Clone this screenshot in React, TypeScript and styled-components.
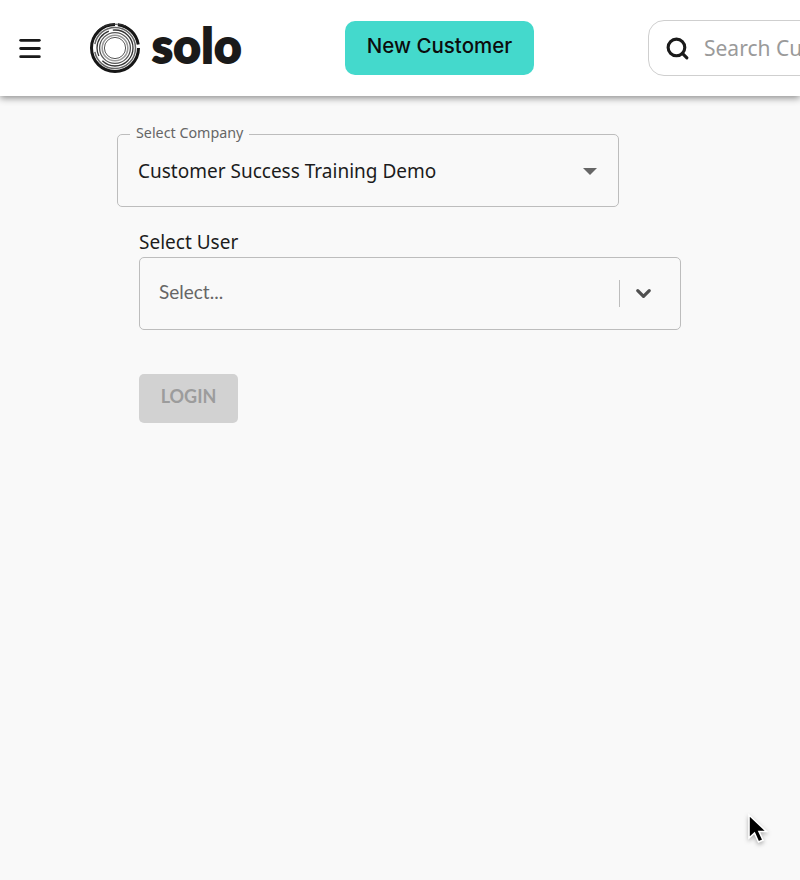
import React from "react";
import styled, { createGlobalStyle } from "styled-components";
import { ChevronDown, Menu, Search } from "lucide-react";

const GlobalStyle = createGlobalStyle`
  html, body {
    margin: 0;
    padding: 0;
    height: 100%;
    overflow: hidden;
    background: #f9f9f9;
  }
  * { box-sizing: border-box; }
`;

const Page = styled.div`
  position: relative;
  width: 800px;
  height: 880px;
  overflow: hidden;
  background: #f9f9f9;
  font-family: "Noto Sans", sans-serif;
`;

const Header = styled.header`
  display: flex;
  align-items: center;
  width: 800px;
  height: 96px;
  padding-left: 16px;
  background: #fff;
  box-shadow: 0 2px 7px rgba(0, 0, 0, 0.45);
  overflow: hidden;
`;

const MenuButton = styled.div`
  flex: none;
  display: flex;
  width: 28px;
  color: #1a1a1a;
`;

const Logo = styled.div`
  flex: none;
  display: flex;
  align-items: center;
  gap: 11px;
  margin-left: 45px;
  width: 256px;
`;

const LogoText = styled.span`
  font-family: "Lato", sans-serif;
  font-weight: 900;
  font-size: 47px;
  line-height: 1;
  letter-spacing: 0.8px;
  color: #1a1a1a;
  position: relative;
  top: -3px;
  -webkit-text-stroke: 2px #1a1a1a;
`;

const NewCustomerButton = styled.button`
  flex: none;
  width: 189px;
  height: 54px;
  border: 0;
  border-radius: 10px;
  background: #44d9cc;
  color: #0c0c0c;
  font-family: "Inter", sans-serif;
  font-weight: 500;
  font-size: 20.5px;
  padding: 0 0 6px;
`;

const SearchBox = styled.div`
  flex: none;
  display: flex;
  align-items: center;
  gap: 14px;
  width: 300px;
  height: 56px;
  margin-left: 114px;
  padding-left: 16px;
  border: 1px solid #cfcfcf;
  border-radius: 16px;
  background: #fff;
  color: #1a1a1a;
`;

const SearchText = styled.span`
  font-size: 21px;
  color: #9a9a9a;
  white-space: nowrap;
`;

const Content = styled.main`
  display: flex;
  flex-direction: column;
  padding: 38px 0 0 117px;
`;

const CompanyField = styled.fieldset`
  display: flex;
  align-items: center;
  justify-content: space-between;
  width: 502px;
  height: 83px;
  margin: -10px 0 0;
  padding: 0 20px;
  border: 1px solid #bdbdbd;
  border-radius: 5px;
`;

const CompanyLegend = styled.legend`
  margin-left: -8px;
  padding: 0 6px 2px;
  font-size: 14.3px;
  line-height: 18px;
  color: #666;
`;

const CompanyValue = styled.div`
  display: flex;
  align-items: center;
  justify-content: space-between;
  width: 100%;
  height: 72px;
  margin-top: -9px;
  font-size: 19px;
  color: #1c1c1c;
`;

const Caret = styled.span`
  width: 0;
  height: 0;
  margin-right: 1px;
  border-left: 7px solid transparent;
  border-right: 7px solid transparent;
  border-top: 7px solid #666;
`;

const UserSection = styled.section`
  display: flex;
  flex-direction: column;
  margin: 23px 0 0 22px;
`;

const UserLabel = styled.label`
  font-size: 19px;
  line-height: 27px;
  margin-top: -1px;
  margin-bottom: 1px;
  color: #1c1c1c;
`;

const UserSelect = styled.div`
  display: flex;
  align-items: center;
  width: 542px;
  height: 73px;
  padding: 0 25px 0 19px;
  border: 1px solid #bdbdbd;
  border-radius: 5px;
`;

const Placeholder = styled.span`
  flex: 1;
  font-family: "Lato", sans-serif;
  font-size: 19px;
  color: #666;
  padding-bottom: 5px;
`;

const Divider = styled.span`
  width: 1px;
  height: 27px;
  margin-right: 12px;
  background: #bdbdbd;
`;

const ChevronSlot = styled.span`
  display: flex;
  color: #505050;
`;

const LoginButton = styled.button`
  width: 99px;
  height: 49px;
  margin-top: 44px;
  padding: 0 0 6px;
  border: 0;
  border-radius: 5px;
  background: #d2d2d2;
  color: #9c9c9c;
  font-family: "Lato", sans-serif;
  font-weight: 700;
  font-size: 18px;
`;

const Pointer = styled.svg`
  position: absolute;
  left: 745px;
  top: 812px;
  filter: drop-shadow(0 2px 2px rgba(0, 0, 0, 0.3));
`;

function LogoMark() {
  return (
    <svg width="52" height="52" viewBox="0 0 52 52" fill="none">
      <circle cx="26" cy="26" r="23.5" stroke="#161616" strokeWidth="3" strokeDasharray="110 3 30 4" />
      <circle cx="26" cy="26" r="20.5" stroke="#666" strokeWidth="1.5" strokeDasharray="60 8" />
      <circle cx="26" cy="26" r="18" stroke="#333" strokeWidth="1.3" strokeDasharray="42 6 30 4" />
      <circle cx="26" cy="26" r="15.4" stroke="#555" strokeWidth="1.3" />
      <circle cx="26" cy="26" r="12.8" stroke="#999" strokeWidth="1.6" />
      <circle cx="26" cy="26" r="10.6" stroke="#444" strokeWidth="0.9" />
      <path d="M8 9C14 3 26 0 37 4" stroke="#333" strokeWidth="1" />
    </svg>
  );
}

export default function App() {
  return (
    <Page>
      <GlobalStyle />
      <Header>
        <MenuButton>
          <Menu size={29} strokeWidth={2.4} />
        </MenuButton>
        <Logo>
          <LogoMark />
          <LogoText>solo</LogoText>
        </Logo>
        <NewCustomerButton>New Customer</NewCustomerButton>
        <SearchBox>
          <Search size={25} strokeWidth={3} />
          <SearchText>Search Customers</SearchText>
        </SearchBox>
      </Header>
      <Content>
        <CompanyField>
          <CompanyLegend>Select Company</CompanyLegend>
          <CompanyValue>
            Customer Success Training Demo
            <Caret />
          </CompanyValue>
        </CompanyField>
        <UserSection>
          <UserLabel>Select User</UserLabel>
          <UserSelect>
            <Placeholder>Select...</Placeholder>
            <Divider />
            <ChevronSlot>
              <ChevronDown size={23} strokeWidth={3.4} />
            </ChevronSlot>
          </UserSelect>
          <LoginButton disabled>LOGIN</LoginButton>
        </UserSection>
      </Content>
      <Pointer width="26" height="36" viewBox="0 0 26 36">
        <path d="M4 3V26L9.5 21L13.5 30L18 28L14 19.5H21.5Z" fill="#000" stroke="#fff" strokeWidth="1.6" />
      </Pointer>
    </Page>
  );
}
